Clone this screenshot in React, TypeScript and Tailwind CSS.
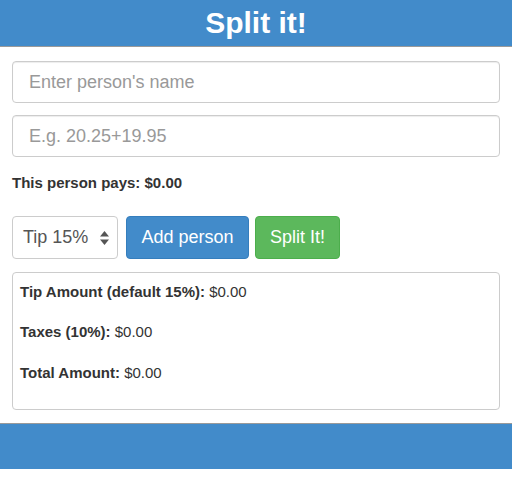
import { useState } from 'react';

const font = { fontFamily: '"Liberation Sans", Arial, sans-serif' };

function SelectArrows() {
  return (
    <svg width="9" height="14" viewBox="0 0 9 14" className="text-[#555]">
      <path d="M4.5 0 L9 5.5 H0 Z" fill="currentColor" />
      <path d="M4.5 14 L9 8.5 H0 Z" fill="currentColor" />
    </svg>
  );
}

export default function App() {
  const [name, setName] = useState('');
  const [amount, setAmount] = useState('');

  return (
    <div className="min-h-[493px] bg-white text-[#333]" style={font}>
      <header className="flex h-[47px] items-center justify-center border-b border-[#9a9a9a] bg-[#428bca]">
        <h1 className="text-[30px] font-bold leading-none text-white">Split it!</h1>
      </header>

      <main className="px-3 pt-[14px]">
        <input
          value={name}
          onChange={(e) => setName(e.target.value)}
          placeholder="Enter person's name"
          className="block h-[42px] w-full rounded border border-[#ccc] px-4 text-[18px] placeholder:text-[#999] shadow-[inset_0_1px_1px_rgba(0,0,0,0.075)] outline-none"
        />
        <input
          value={amount}
          onChange={(e) => setAmount(e.target.value)}
          placeholder="E.g. 20.25+19.95"
          className="mt-3 block h-[42px] w-full rounded border border-[#ccc] px-4 text-[18px] placeholder:text-[#999] shadow-[inset_0_1px_1px_rgba(0,0,0,0.075)] outline-none"
        />
        <p className="mt-[16px] text-[15px] font-bold leading-[20px]">This person pays: $0.00</p>

        <div className="mt-[23px] flex items-center">
          <div className="flex h-[43px] w-[106px] items-center justify-between rounded border border-[#ccc] pl-[10px] pr-[8px] text-[18px] text-[#555]">
            <span>Tip 15%</span>
            <SelectArrows />
          </div>
          <button className="ml-2 h-[43px] w-[123px] rounded border border-[#357ebd] bg-[#428bca] text-[18px] text-white">
            Add person
          </button>
          <button className="ml-[6px] h-[43px] w-[85px] rounded border border-[#4cae4c] bg-[#5cb85c] text-[18px] text-white">
            Split It!
          </button>
        </div>

        <div className="mt-[13px] h-[138px] rounded border border-[#ccc] px-[7px] pt-[10px] text-[15px] leading-[18px]">
          <p>
            <b>Tip Amount (default 15%):</b> $0.00
          </p>
          <p className="mt-[22px]">
            <b>Taxes (10%):</b> $0.00
          </p>
          <p className="mt-[23px]">
            <b>Total Amount:</b> $0.00
          </p>
        </div>
      </main>

      <footer className="mt-[13px] h-[46px] border-t border-[#9a9a9a] bg-[#428bca]" />
    </div>
  );
}
